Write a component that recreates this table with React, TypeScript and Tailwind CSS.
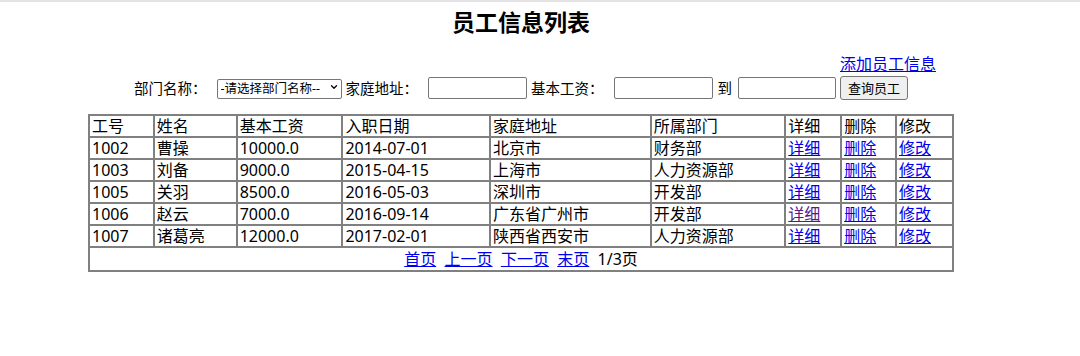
import { ChevronDown } from "lucide-react";

const rows = [
  { id: "1002", name: "曹操", salary: "10000.0", date: "2014-07-01", addr: "北京市", dept: "财务部" },
  { id: "1003", name: "刘备", salary: "9000.0", date: "2015-04-15", addr: "上海市", dept: "人力资源部" },
  { id: "1005", name: "关羽", salary: "8500.0", date: "2016-05-03", addr: "深圳市", dept: "开发部" },
  { id: "1006", name: "赵云", salary: "7000.0", date: "2016-09-14", addr: "广东省广州市", dept: "开发部", visited: true },
  { id: "1007", name: "诸葛亮", salary: "12000.0", date: "2017-02-01", addr: "陕西省西安市", dept: "人力资源部" },
];

const heads = ["工号", "姓名", "基本工资", "入职日期", "家庭地址", "所属部门", "详细", "删除", "修改"];
const widths = ["w-[65px]", "w-[83px]", "w-[106px]", "w-[148px]", "w-[161px]", "w-[135px]", "w-[56px]", "w-[55px]", "w-[57px]"];

const td = "border border-[#808080] px-[2px] py-0 leading-[18px] h-[22px] text-left font-normal align-middle whitespace-nowrap";
const link = "text-[#0000ee] underline";

const App = () => {
  return (
    <div className="min-h-[356px] bg-white text-black font-['Noto_Sans','Noto_Sans_CJK_SC',sans-serif]">
      <div className="h-[2px] bg-[#e3e3e6]" />
      <div className="w-[1042px] flex flex-col items-center">
        <h1 className="mt-[5px] text-[23px] font-bold leading-[30px]">员工信息列表</h1>

        <div className="w-[866px] flex justify-end mt-[17px]">
          <a href="#" className={`${link} text-[16px] leading-[20px] mr-[18px]`}>添加员工信息</a>
        </div>

        {/* 查询条件 */}
        <div className="flex items-center text-[14.5px] leading-[20px] mt-[1px] h-[26px]">
          <span className="mr-[10px]">部门名称：</span>
          <div className="relative">
            <select className="appearance-none w-[125px] h-[20px] border border-[#767676] rounded-[2px] pl-[3px] pr-[14px] text-[12.5px] leading-[18px] bg-white">
              <option>-请选择部门名称--</option>
            </select>
            <ChevronDown className="absolute right-[3px] top-[5px] w-[10px] h-[10px] pointer-events-none" strokeWidth={3} />
          </div>
          <span className="ml-[4px] mr-[10px]">家庭地址：</span>
          <input className="w-[99px] h-[22px] border border-[#767676] rounded-[2px] bg-white" />
          <span className="ml-[4px] mr-[10px]">基本工资：</span>
          <input className="w-[99px] h-[22px] border border-[#767676] rounded-[2px] bg-white" />
          <span className="ml-[5px] mr-[6px]">到</span>
          <input className="w-[98px] h-[22px] border border-[#767676] rounded-[2px] bg-white" />
          <button className="ml-[4px] w-[68px] h-[24px] border border-[#767676] rounded-[3px] bg-[#efefef] text-[13px]">
            查询员工
          </button>
        </div>

        <table className="mt-[13px] w-[866px] border-separate border-spacing-0 border border-[#808080] text-[16px]">
          <thead>
            <tr>
              {heads.map((h, i) => (
                <th key={h} className={`${td} ${widths[i]}`}>{h}</th>
              ))}
            </tr>
          </thead>
          <tbody>
            {rows.map((r) => (
              <tr key={r.id}>
                <td className={td}>{r.id}</td>
                <td className={td}>{r.name}</td>
                <td className={td}>{r.salary}</td>
                <td className={td}>{r.date}</td>
                <td className={td}>{r.addr}</td>
                <td className={td}>{r.dept}</td>
                <td className={td}>
                  <a href="#" className={r.visited ? "text-[#551a8b] underline" : link}>详细</a>
                </td>
                <td className={td}>
                  <a href="#" className={link}>删除</a>
                </td>
                <td className={td}>
                  <a href="#" className={link}>修改</a>
                </td>
              </tr>
            ))}
            <tr>
              <td colSpan={9} className="border border-[#808080] h-[24px] leading-[20px] text-center">
                <a href="#" className={link}>首页</a>
                <span>&nbsp;&nbsp;</span>
                <a href="#" className={link}>上一页</a>
                <span>&nbsp;&nbsp;</span>
                <a href="#" className={link}>下一页</a>
                <span>&nbsp;&nbsp;</span>
                <a href="#" className={link}>末页</a>
                <span>&nbsp;&nbsp;1/3页</span>
              </td>
            </tr>
          </tbody>
        </table>
      </div>
    </div>
  );
};

export default App;
